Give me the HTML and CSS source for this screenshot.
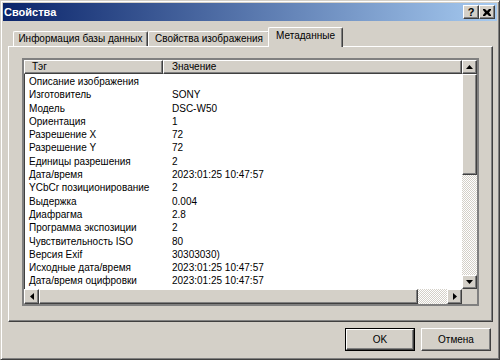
FILE: index.html
```
<!DOCTYPE html>
<html lang="ru">
<head>
    <meta charset="UTF-8">
    <title>Свойства</title>
    <link rel="stylesheet" href="styles.css">
</head>
<body>
    <div class="window">
        <div class="titlebar">
            <span class="title">Свойства</span>
            <div class="title-btns">
                <span class="tbtn help">?</span>
                <span class="tbtn close">
                    <svg width="8" height="7" viewBox="0 0 8 7"><path d="M0 0h2l2 2 2-2h2v1L6 3.5 8 6v1H6L4 5 2 7H0V6l2-2.5L0 1z" fill="#000"/></svg>
                </span>
            </div>
        </div>
        <div class="content">
            <div class="tabs">
                <div class="tab tab-info">Информация базы данных</div>
                <div class="tab tab-props">Свойства изображения</div>
                <div class="tab tab-meta active">Метаданные</div>
            </div>
            <div class="panel">
                <div class="listview">
                    <div class="list-main">
                        <div class="list-head">
                            <div class="hcell hcell-tag">Тэг</div>
                            <div class="hcell hcell-val">Значение</div>
                        </div>
                        <div class="list-body">
                            <div class="row"><span>Описание изображения</span><span></span></div>
                            <div class="row"><span>Изготовитель</span><span>SONY</span></div>
                            <div class="row"><span>Модель</span><span>DSC-W50</span></div>
                            <div class="row"><span>Ориентация</span><span>1</span></div>
                            <div class="row"><span>Разрешение X</span><span>72</span></div>
                            <div class="row"><span>Разрешение Y</span><span>72</span></div>
                            <div class="row"><span>Единицы разрешения</span><span>2</span></div>
                            <div class="row"><span>Дата/время</span><span>2023:01:25 10:47:57</span></div>
                            <div class="row"><span>YCbCr позиционирование</span><span>2</span></div>
                            <div class="row"><span>Выдержка</span><span>0.004</span></div>
                            <div class="row"><span>Диафрагма</span><span>2.8</span></div>
                            <div class="row"><span>Программа экспозиции</span><span>2</span></div>
                            <div class="row"><span>Чувствительность ISO</span><span>80</span></div>
                            <div class="row"><span>Версия Exif</span><span>30303030)</span></div>
                            <div class="row"><span>Исходные дата/время</span><span>2023:01:25 10:47:57</span></div>
                            <div class="row"><span>Дата/время оцифровки</span><span>2023:01:25 10:47:57</span></div>
                            <div class="row"><span>Конфигурация компонентов</span><span>01010101)</span></div>
                        </div>
                    </div>
                    <div class="vscroll">
                        <div class="sbtn"><svg width="7" height="4" viewBox="0 0 7 4"><path d="M3.5 0L7 4H0z" fill="#000"/></svg></div>
                        <div class="sthumb vthumb"></div>
                        <div class="strack"></div>
                        <div class="sbtn"><svg width="7" height="4" viewBox="0 0 7 4"><path d="M0 0h7L3.5 4z" fill="#000"/></svg></div>
                    </div>
                    <div class="hscroll">
                        <div class="sbtn"><svg width="4" height="7" viewBox="0 0 4 7"><path d="M4 0v7L0 3.5z" fill="#000"/></svg></div>
                        <div class="sthumb hthumb"></div>
                        <div class="strack"></div>
                        <div class="sbtn"><svg width="4" height="7" viewBox="0 0 4 7"><path d="M0 0l4 3.5L0 7z" fill="#000"/></svg></div>
                    </div>
                    <div class="corner"></div>
                </div>
            </div>
            <div class="buttons">
                <div class="btn default"><span>OK</span></div>
                <div class="btn"><span>Отмена</span></div>
            </div>
        </div>
    </div>
</body>
</html>
```

FILE: styles.css
```
* { margin: 0; padding: 0; box-sizing: border-box; }
body {
    background: #d4d0c8;
    font-family: "Liberation Sans", Arial, sans-serif;
    font-size: 10px;
    color: #000;
}
.window {
    width: 500px;
    height: 360px;
    background: #d4d0c8;
    border: 1px solid;
    border-color: #d4d0c8 #404040 #404040 #d4d0c8;
    box-shadow: inset 1px 1px #fff, inset -1px -1px #808080;
    padding: 2px;
    display: flex;
    flex-direction: column;
}
.titlebar {
    height: 18px;
    background: linear-gradient(to right, #0a246a, #a6caf0);
    display: flex;
    align-items: center;
    justify-content: space-between;
    padding-left: 1px;
}
.title {
    color: #fff;
    font-weight: bold;
    font-size: 11px;
}
.title-btns {
    display: flex;
    margin-right: 2px;
}
.tbtn {
    width: 16px;
    height: 14px;
    background: #d4d0c8;
    border: 1px solid;
    border-color: #fff #404040 #404040 #fff;
    box-shadow: inset -1px -1px #808080;
    display: flex;
    align-items: center;
    justify-content: center;
    font-weight: bold;
    font-size: 11px;
    line-height: 1;
}
.content {
    flex: 1;
    display: flex;
    flex-direction: column;
    padding: 6px 4px 0 5px;
}
.tabs {
    height: 19px;
    display: flex;
    align-items: flex-end;
    padding-left: 5px;
}
.tab {
    height: 15px;
    line-height: 13px;
    text-align: center;
    border-top: 1px solid #fff;
    border-left: 1px solid #fff;
    border-right: 1px solid #404040;
    box-shadow: inset -1px 0 #808080;
    border-radius: 2px 2px 0 0;
    white-space: nowrap;
}
.tab-info { width: 135px; }
.tab-props { width: 122px; }
.tab-meta { width: 75px; }
.tab.active {
    height: 20px;
    line-height: 16px;
    margin: 0 -2px -1px;
    background: #d4d0c8;
    position: relative;
    z-index: 1;
}
.panel {
    height: 276px;
    border: 1px solid;
    border-color: #fff #404040 #404040 #fff;
    box-shadow: inset -1px -1px #808080;
    padding: 11px 13px 15px 13px;
    display: flex;
}
.listview {
    flex: 1;
    border: 2px solid #808080;
    box-shadow: inset 1px 1px #404040;
    background: #fff;
    display: grid;
    grid-template-columns: 1fr 15px;
    grid-template-rows: 1fr 15px;
}
.list-main {
    overflow: hidden;
}
.list-head {
    display: flex;
    height: 14px;
}
.hcell {
    background: #d4d0c8;
    border: 1px solid;
    border-color: #fff #404040 #404040 #fff;
    box-shadow: inset -1px -1px #808080;
    line-height: 12px;
    white-space: nowrap;
}
.hcell-tag {
    width: 139px;
    padding-left: 7px;
}
.hcell-val {
    flex: 1;
    padding-left: 8px;
}
.list-body {
    padding-top: 1px;
}
.row {
    display: grid;
    grid-template-columns: 139px 1fr;
    height: 13.3px;
    line-height: 13px;
    white-space: nowrap;
}
.row span:first-child {
    padding-left: 5px;
    overflow: hidden;
}
.row span:last-child {
    padding-left: 9px;
}
.vscroll, .hscroll {
    display: flex;
    background: repeating-conic-gradient(#fff 0 25%, #d4d0c8 0 50%) 0 0 / 2px 2px;
}
.vscroll {
    flex-direction: column;
}
.sbtn, .sthumb {
    background: #d4d0c8;
    border: 1px solid;
    border-color: #fff #404040 #404040 #fff;
    box-shadow: inset -1px -1px #808080;
    display: flex;
    align-items: center;
    justify-content: center;
    flex: none;
}
.vscroll .sbtn { height: 14px; }
.hscroll .sbtn { width: 15px; }
.vthumb { height: 101px; }
.hthumb { width: 379px; }
.strack { flex: 1; }
.corner { background: #d4d0c8; }
.buttons {
    display: flex;
    justify-content: flex-end;
    gap: 6px;
    padding-top: 6px;
    margin-right: 2px;
}
.btn {
    width: 70px;
    height: 23px;
    border: 1px solid;
    border-color: #fff #404040 #404040 #fff;
    box-shadow: inset -1px -1px #808080;
    display: flex;
    align-items: center;
    justify-content: center;
}
.btn.default {
    border: 1px solid #000;
    box-shadow: none;
}
.btn.default span {
    width: 100%;
    height: 100%;
    display: flex;
    align-items: center;
    justify-content: center;
    border: 1px solid;
    border-color: #fff #404040 #404040 #fff;
    box-shadow: inset -1px -1px #808080;
}
```
